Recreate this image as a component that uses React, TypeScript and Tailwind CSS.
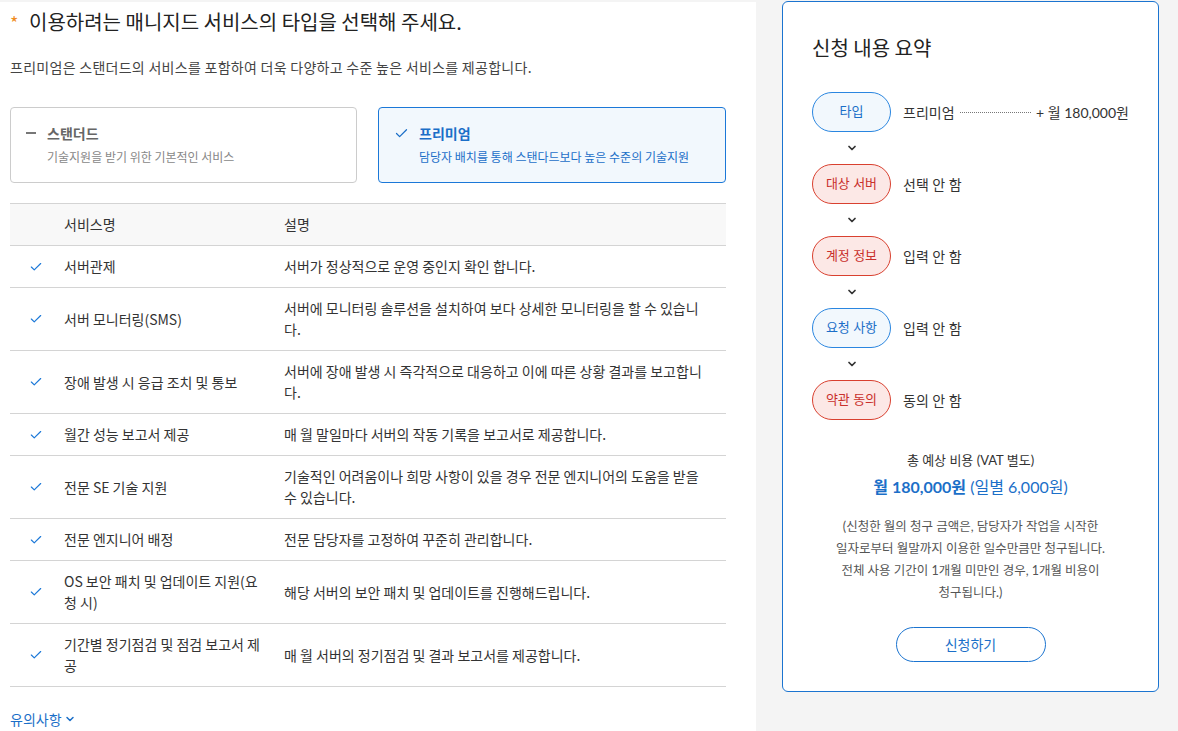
import { Check, ChevronDown } from "lucide-react";

type Service = {
  name: string;
  desc: string;
};

const services: Service[] = [
  { name: "서버관제", desc: "서버가 정상적으로 운영 중인지 확인 합니다." },
  { name: "서버 모니터링(SMS)", desc: "서버에 모니터링 솔루션을 설치하여 보다 상세한 모니터링을 할 수 있습니다." },
  { name: "장애 발생 시 응급 조치 및 통보", desc: "서버에 장애 발생 시 즉각적으로 대응하고 이에 따른 상황 결과를 보고합니다." },
  { name: "월간 성능 보고서 제공", desc: "매 월 말일마다 서버의 작동 기록을 보고서로 제공합니다." },
  { name: "전문 SE 기술 지원", desc: "기술적인 어려움이나 희망 사항이 있을 경우 전문 엔지니어의 도움을 받을 수 있습니다." },
  { name: "전문 엔지니어 배정", desc: "전문 담당자를 고정하여 꾸준히 관리합니다." },
  { name: "OS 보안 패치 및 업데이트 지원(요청 시)", desc: "해당 서버의 보안 패치 및 업데이트를 진행해드립니다." },
  { name: "기간별 정기점검 및 점검 보고서 제공", desc: "매 월 서버의 정기점검 및 결과 보고서를 제공합니다." },
];

type Step = {
  label: string;
  value: string;
  ok: boolean;
};

const steps: Step[] = [
  { label: "타입", value: "프리미엄", ok: true },
  { label: "대상 서버", value: "선택 안 함", ok: false },
  { label: "계정 정보", value: "입력 안 함", ok: false },
  { label: "요청 사항", value: "입력 안 함", ok: true },
  { label: "약관 동의", value: "동의 안 함", ok: false },
];

const kr = "font-['Noto_Sans_CJK_KR',sans-serif]";
const lato = "font-['Lato','Noto_Sans_CJK_KR',sans-serif]";

function Pill({ step }: { step: Step }) {
  return (
    <div
      className={
        step.ok
          ? "w-[79px] h-[40px] shrink-0 rounded-full border border-[#2a86e0] bg-[#f2f8fd] text-[#1b6fc8] flex items-center justify-center text-[13px]"
          : "w-[79px] h-[40px] shrink-0 rounded-full border border-[#d9402f] bg-[#fce8e6] text-[#c9302c] flex items-center justify-center text-[13px]"
      }
    >
      {step.label}
    </div>
  );
}

export default function App() {
  return (
    <div className={`w-[1178px] h-[731px] flex bg-[#f4f4f4] overflow-hidden ${kr}`}>
      {/* left */}
      <main className="w-[756px] mt-[2px] bg-white pl-[10px] pr-[30px]">
        <h1 className="pt-[5px] text-[20px] leading-[30px] text-[#222] flex">
          <span className="text-[#f08c1e] w-[19px] text-[18px]">*</span>
          이용하려는 매니지드 서비스의 타입을 선택해 주세요.
        </h1>
        <p className="mt-[20px] text-[14px] leading-[20px] text-[#444] tracking-[0.02em]">
          프리미엄은 스탠더드의 서비스를 포함하여 더욱 다양하고 수준 높은 서비스를 제공합니다.
        </p>

        <div className="mt-[30px] flex gap-[21px]">
          <div className="w-[347px] h-[76px] rounded-[4px] border border-[#cccccc] pl-[15px] pt-[15px]">
            <div className="flex items-center h-[20px]">
              <span className="w-[21px] flex items-center">
                <span className="block w-[10px] h-[2px] bg-[#777]" />
              </span>
              <span className="text-[14px] font-bold text-[#666]">스탠더드</span>
            </div>
            <p className="mt-[5px] pl-[21px] text-[12px] leading-[18px] text-[#888]">
              기술지원을 받기 위한 기본적인 서비스
            </p>
          </div>
          <div className="w-[348px] h-[76px] rounded-[4px] border border-[#1b78d8] bg-[#f2f8fd] pl-[15px] pt-[15px]">
            <div className="flex items-center h-[20px]">
              <span className="w-[25px] flex items-center text-[#1b6fc8]">
                <Check size={15} strokeWidth={2} />
              </span>
              <span className="text-[14px] font-bold text-[#1b6fc8]">프리미엄</span>
            </div>
            <p className="mt-[5px] pl-[25px] text-[12px] leading-[18px] text-[#1b6fc8]">
              담당자 배치를 통해 스탠다드보다 높은 수준의 기술지원
            </p>
          </div>
        </div>

        <table className="mt-[20px] w-[716px] border-collapse text-[14px] leading-[21px] text-[#333]">
          <thead>
            <tr className="bg-[#f8f8f8] border-t border-b border-[#d4d4d4]">
              <th className="w-[54px] p-0" />
              <th className="w-[220px] py-[10px] pr-[16px] text-left font-normal">서비스명</th>
              <th className="py-[10px] pr-[20px] text-left font-normal">설명</th>
            </tr>
          </thead>
          <tbody>
            {services.map((s) => (
              <tr key={s.name} className="border-b border-[#d4d4d4]">
                <td className="pl-[19px] py-[10px] align-middle text-[#1b78d8]">
                  <Check size={14} strokeWidth={2} />
                </td>
                <td className="py-[10px] pr-[16px] align-middle">{s.name}</td>
                <td className="py-[10px] pr-[20px] align-middle">{s.desc}</td>
              </tr>
            ))}
          </tbody>
        </table>

        <button className="mt-[22px] flex items-center gap-[2px] text-[14px] leading-[20px] text-[#1b6fc8]">
          유의사항
          <ChevronDown size={12} strokeWidth={3} />
        </button>
      </main>

      {/* right */}
      <aside className="flex-1 pl-[26px] pt-[1px]">
        <div className={`w-[377px] h-[691px] rounded-[6px] border border-[#1b74d0] bg-white px-[29px] pt-[31px] ${lato}`}>
          <h2 className={`text-[20px] leading-[30px] text-[#222] ${kr}`}>신청 내용 요약</h2>

          <div className="mt-[29px]">
            {steps.map((step, i) => (
              <div key={step.label}>
                {i > 0 && (
                  <div className="w-[79px] h-[32px] flex items-center justify-center text-[#333]">
                    <ChevronDown size={12} strokeWidth={3.5} />
                  </div>
                )}
                <div className="flex items-center h-[40px]">
                  <Pill step={step} />
                  <span className="ml-[12px] text-[14px] text-[#333]">{step.value}</span>
                  {i === 0 && (
                    <>
                      <span className="flex-1 mx-[5px] border-b border-dotted border-[#777]" />
                      <span className="text-[14px] text-[#333]">+ 월 180,000원</span>
                    </>
                  )}
                </div>
              </div>
            ))}
          </div>

          <div className="mt-[30px] text-center">
            <p className="text-[13px] leading-[20px] text-[#333]">총 예상 비용 (VAT 별도)</p>
            <p className="mt-[5px] text-[16px] leading-[24px] text-[#1b6fc8]">
              <span className="font-bold">월 180,000원</span> (일별 6,000원)
            </p>
            <p className="mt-[17px] text-[12.5px] leading-[22px] text-[#555]">
              (신청한 월의 청구 금액은, 담당자가 작업을 시작한
              <br />
              일자로부터 월말까지 이용한 일수만큼만 청구됩니다.
              <br />
              전체 사용 기간이 1개월 미만인 경우, 1개월 비용이
              <br />
              청구됩니다.)
            </p>
            <button className="mt-[23px] w-[150px] h-[35px] rounded-full border border-[#1b74d0] text-[14px] text-[#1b6fc8]">
              신청하기
            </button>
          </div>
        </div>
      </aside>
    </div>
  );
}
